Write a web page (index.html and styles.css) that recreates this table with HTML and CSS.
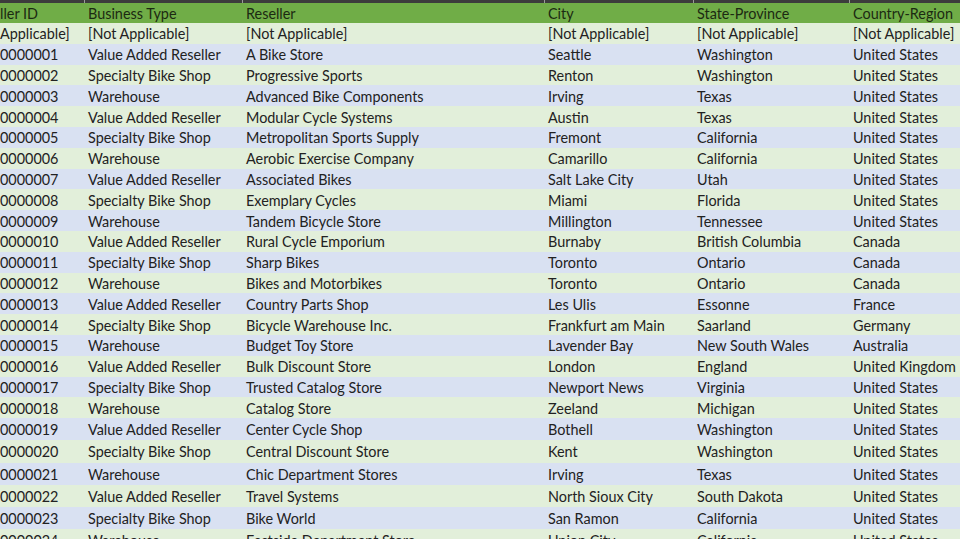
FILE: index.html
```html
<!DOCTYPE html>
<html>
<head>
<meta charset="utf-8">
<link rel="stylesheet" href="styles.css">
</head>
<body>
<div class="sheet">
  <div class="row strip"><div></div><div></div><div></div><div></div><div></div><div></div></div>
  <div class="row head"><div>ller ID</div><div>Business Type</div><div>Reseller</div><div>City</div><div>State-Province</div><div>Country-Region</div></div>
  <div class="row g"><div>Applicable]</div><div>[Not Applicable]</div><div>[Not Applicable]</div><div>[Not Applicable]</div><div>[Not Applicable]</div><div>[Not Applicable]</div></div>
  <div class="row b"><div>0000001</div><div>Value Added Reseller</div><div>A Bike Store</div><div>Seattle</div><div>Washington</div><div>United States</div></div>
  <div class="row g"><div>0000002</div><div>Specialty Bike Shop</div><div>Progressive Sports</div><div>Renton</div><div>Washington</div><div>United States</div></div>
  <div class="row b"><div>0000003</div><div>Warehouse</div><div>Advanced Bike Components</div><div>Irving</div><div>Texas</div><div>United States</div></div>
  <div class="row g"><div>0000004</div><div>Value Added Reseller</div><div>Modular Cycle Systems</div><div>Austin</div><div>Texas</div><div>United States</div></div>
  <div class="row b"><div>0000005</div><div>Specialty Bike Shop</div><div>Metropolitan Sports Supply</div><div>Fremont</div><div>California</div><div>United States</div></div>
  <div class="row g"><div>0000006</div><div>Warehouse</div><div>Aerobic Exercise Company</div><div>Camarillo</div><div>California</div><div>United States</div></div>
  <div class="row b"><div>0000007</div><div>Value Added Reseller</div><div>Associated Bikes</div><div>Salt Lake City</div><div>Utah</div><div>United States</div></div>
  <div class="row g"><div>0000008</div><div>Specialty Bike Shop</div><div>Exemplary Cycles</div><div>Miami</div><div>Florida</div><div>United States</div></div>
  <div class="row b"><div>0000009</div><div>Warehouse</div><div>Tandem Bicycle Store</div><div>Millington</div><div>Tennessee</div><div>United States</div></div>
  <div class="row g"><div>0000010</div><div>Value Added Reseller</div><div>Rural Cycle Emporium</div><div>Burnaby</div><div>British Columbia</div><div>Canada</div></div>
  <div class="row b"><div>0000011</div><div>Specialty Bike Shop</div><div>Sharp Bikes</div><div>Toronto</div><div>Ontario</div><div>Canada</div></div>
  <div class="row g"><div>0000012</div><div>Warehouse</div><div>Bikes and Motorbikes</div><div>Toronto</div><div>Ontario</div><div>Canada</div></div>
  <div class="row b"><div>0000013</div><div>Value Added Reseller</div><div>Country Parts Shop</div><div>Les Ulis</div><div>Essonne</div><div>France</div></div>
  <div class="row g"><div>0000014</div><div>Specialty Bike Shop</div><div>Bicycle Warehouse Inc.</div><div>Frankfurt am Main</div><div>Saarland</div><div>Germany</div></div>
  <div class="row b"><div>0000015</div><div>Warehouse</div><div>Budget Toy Store</div><div>Lavender Bay</div><div>New South Wales</div><div>Australia</div></div>
  <div class="row g"><div>0000016</div><div>Value Added Reseller</div><div>Bulk Discount Store</div><div>London</div><div>England</div><div>United Kingdom</div></div>
  <div class="row b"><div>0000017</div><div>Specialty Bike Shop</div><div>Trusted Catalog Store</div><div>Newport News</div><div>Virginia</div><div>United States</div></div>
  <div class="row g"><div>0000018</div><div>Warehouse</div><div>Catalog Store</div><div>Zeeland</div><div>Michigan</div><div>United States</div></div>
  <div class="row b tall"><div>0000019</div><div>Value Added Reseller</div><div>Center Cycle Shop</div><div>Bothell</div><div>Washington</div><div>United States</div></div>
  <div class="row g tall"><div>0000020</div><div>Specialty Bike Shop</div><div>Central Discount Store</div><div>Kent</div><div>Washington</div><div>United States</div></div>
  <div class="row b tall"><div>0000021</div><div>Warehouse</div><div>Chic Department Stores</div><div>Irving</div><div>Texas</div><div>United States</div></div>
  <div class="row g tall"><div>0000022</div><div>Value Added Reseller</div><div>Travel Systems</div><div>North Sioux City</div><div>South Dakota</div><div>United States</div></div>
  <div class="row b tall"><div>0000023</div><div>Specialty Bike Shop</div><div>Bike World</div><div>San Ramon</div><div>California</div><div>United States</div></div>
  <div class="row g tall"><div>0000024</div><div>Warehouse</div><div>Eastside Department Store</div><div>Union City</div><div>California</div><div>United States</div></div>
</div>
</body>
</html>
```
FILE: styles.css
```css
html, body {
  margin: 0;
  padding: 0;
  background: #ffffff;
  overflow: hidden;
  width: 960px;
  height: 539px;
}
.sheet {
  width: 960px;
  font-family: Lato, "Liberation Sans", sans-serif;
  font-size: 14.4px;
  color: #222222;
}
.row {
  display: grid;
  grid-template-columns: 84px 158px 302px 149px 156px 111px;
  height: 20.8px;
  align-items: start;
}
.row > div {
  padding-left: 4px;
  padding-top: 1.4px;
  white-space: nowrap;
  overflow: hidden;
  line-height: 20px;
}
.row > div:first-child {
  padding-left: 0;
}
.row.tall {
  height: 22.2px;
}
.row.tall > div {
  padding-top: 2px;
}
.strip {
  height: 3px;
  background: #3c3c3c;
  align-items: stretch;
}
.strip > div {
  border-left: 1px solid #9a9a9a;
  line-height: 0;
  padding-top: 0;
}
.strip > div:first-child {
  border-left: none;
}
.head {
  height: 20px;
  background: #70ad47;
  color: #1c2a12;
}
.head > div {
  padding-top: 0.6px;
}
.g {
  background: #e2efda;
}
.b {
  background: #d9e1f2;
}
```
